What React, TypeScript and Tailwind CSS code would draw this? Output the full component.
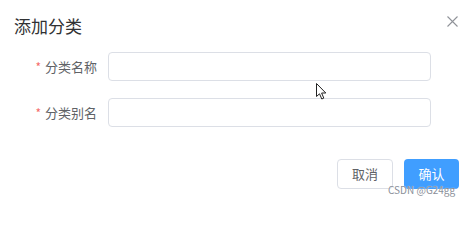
import React from 'react';

const fields = ['分类名称', '分类别名'];

const App: React.FC = () => {
  return (
    <div
      className="relative w-[474px] h-[204px] bg-white overflow-hidden"
      style={{ fontFamily: '"Noto Sans CJK SC", "Noto Sans", sans-serif' }}
    >
      {/* header */}
      <div className="flex items-start justify-between pl-[14px] pr-[16px] pt-[14px]">
        <span className="text-[17px] leading-[24px] text-[#303133]">添加分类</span>
        <button className="mt-[1px] w-[12px] h-[12px] flex items-center justify-center text-[#909399]">
          <svg width="11" height="11" viewBox="0 0 11 11" fill="none" stroke="currentColor" strokeWidth="1.1">
            <path d="M0.5 0.5 L10.5 10.5 M10.5 0.5 L0.5 10.5" />
          </svg>
        </button>
      </div>

      {/* form */}
      <div className="flex flex-col gap-[17px] mt-[14px] pr-[43px]">
        {fields.map((label) => (
          <div key={label} className="flex items-center">
            <label className="w-[108px] pr-[11px] flex justify-end items-center text-[13px] text-[#606266]">
              <span className="text-[#f56c6c] mr-[4px] text-[12px]">*</span>
              {label}
            </label>
            <input
              className="flex-1 h-[29px] rounded-[4px] border border-[#dcdfe6] bg-white px-[10px] text-[13px] outline-none"
              type="text"
            />
          </div>
        ))}
      </div>

      {/* footer */}
      <div className="flex justify-end gap-[11px] pr-[15px] mt-[32px]">
        <button className="w-[56px] h-[30px] rounded-[4px] border border-[#dcdfe6] bg-white text-[13px] text-[#606266]">
          取消
        </button>
        <button className="w-[55px] h-[30px] rounded-[4px] bg-[#409eff] text-[13px] text-white">
          确认
        </button>
      </div>

      {/* cursor */}
      <svg className="absolute left-[316px] top-[83px]" width="11" height="17" viewBox="0 0 11 17">
        <path
          d="M0.5 0.5 L0.5 13.5 L3.5 10.8 L5.8 16 L7.8 15.1 L5.6 10 L9.8 10 Z"
          fill="white"
          stroke="#222"
          strokeWidth="1"
          strokeLinejoin="round"
        />
      </svg>

      {/* watermark */}
      <span
        className="absolute left-[388px] top-[183px] text-[10px] leading-[14px] text-[#8a8f99]"
        style={{ textShadow: '0 0 1px #fff' }}
      >
        CSDN @G24gg
      </span>
    </div>
  );
};

export default App;
